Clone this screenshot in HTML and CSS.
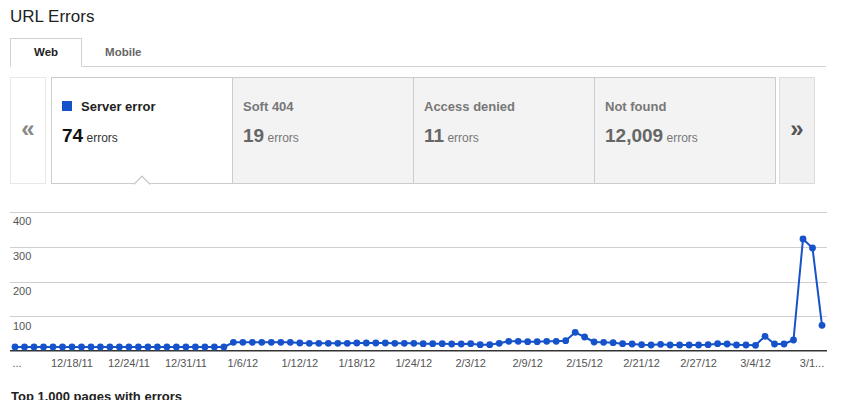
FILE: index.html
```html
<!DOCTYPE html>
<html>
<head>
<meta charset="utf-8">
<title>URL Errors</title>
<link rel="stylesheet" href="styles.css">
</head>
<body>
<div class="page">
  <h1 class="title">URL Errors</h1>
  <div class="tabs">
    <div class="tab active">Web</div>
    <div class="tab">Mobile</div>
  </div>
  <div class="summary">
    <div class="nav nav-prev">«</div>
    <div class="cards">
      <div class="card selected">
        <div class="card-title"><span class="swatch"></span>Server error</div>
        <div class="card-count"><span class="num">74</span> errors</div>
        <span class="caret"></span>
      </div>
      <div class="card">
        <div class="card-title">Soft 404</div>
        <div class="card-count"><span class="num">19</span> errors</div>
      </div>
      <div class="card">
        <div class="card-title">Access denied</div>
        <div class="card-count"><span class="num">11</span> errors</div>
      </div>
      <div class="card">
        <div class="card-title">Not found</div>
        <div class="card-count"><span class="num">12,009</span> errors</div>
      </div>
    </div>
    <div class="nav nav-next">»</div>
  </div>
</div>
<svg class="chart" width="844" height="189" viewBox="0 0 844 189" xmlns="http://www.w3.org/2000/svg">
  <defs>
    <marker id="dot" markerWidth="8" markerHeight="8" refX="4" refY="4" markerUnits="userSpaceOnUse">
      <circle cx="4" cy="4" r="3.4" fill="#1652c9"/>
    </marker>
  </defs>
  <g class="grid">
    <line x1="10" x2="827" y1="12.5" y2="12.5"/>
    <line x1="10" x2="827" y1="47.5" y2="47.5"/>
    <line x1="10" x2="827" y1="82.5" y2="82.5"/>
    <line x1="10" x2="827" y1="116.5" y2="116.5"/>
  </g>
  <line class="axis" x1="10" x2="827" y1="150.8" y2="150.8"/>
  <g class="ylab">
    <text x="13" y="25">400</text>
    <text x="13" y="60">300</text>
    <text x="13" y="94.5">200</text>
    <text x="13" y="129.5">100</text>
  </g>
  <polyline class="series" points="15,147 24.5,147 34,147 43.5,147 53,147 62.5,147 72,147 81.5,147 91,147 100.4,147 109.9,147 119.4,147 128.9,147 138.4,147 147.9,147 157.4,147 166.9,147 176.4,147 185.9,147 195.4,147 204.9,147 214.4,147 223.9,147 233.4,142.3 242.9,142.3 252.4,142.3 261.8,142.3 271.3,142.3 280.8,142.3 290.3,142.3 299.8,143 309.3,143.3 318.8,143.3 328.3,143.3 337.8,143.3 347.3,143.3 356.8,143 366.3,143 375.8,143 385.3,143 394.8,143.3 404.3,143.3 413.8,143.3 423.2,143.7 432.7,143.7 442.2,143.7 451.7,144 461.2,144 470.7,143.7 480.2,144.7 489.7,144.7 499.2,143.3 508.7,141.3 518.2,141.3 527.7,141.7 537.2,141.7 546.7,141.3 556.2,141.3 565.7,140.7 575.2,132.3 584.6,137 594.1,142 603.6,142.3 613.1,142.7 622.6,143.7 632.1,144 641.6,144.7 651.1,145 660.6,144.3 670.1,145 679.6,145 689.1,145 698.6,145 708.1,144.7 717.6,143.7 727.1,144 736.5,145 746,145 755.5,145.3 765,136.3 774.5,144 784,144 793.5,140 803,39 812.5,48 822,125.3"/>
  <g class="xlab">
    <text x="17" y="166.5">...</text>
    <text x="72" y="166.5">12/18/11</text>
    <text x="128.9" y="166.5">12/24/11</text>
    <text x="185.9" y="166.5">12/31/11</text>
    <text x="242.9" y="166.5">1/6/12</text>
    <text x="299.8" y="166.5">1/12/12</text>
    <text x="356.8" y="166.5">1/18/12</text>
    <text x="413.8" y="166.5">1/24/12</text>
    <text x="470.7" y="166.5">2/3/12</text>
    <text x="527.7" y="166.5">2/9/12</text>
    <text x="584.6" y="166.5">2/15/12</text>
    <text x="641.6" y="166.5">2/21/12</text>
    <text x="698.6" y="166.5">2/27/12</text>
    <text x="755.5" y="166.5">3/4/12</text>
    <text x="812" y="166.5">3/1...</text>
  </g>
</svg>
<h2 class="section">Top 1,000 pages with errors</h2>
</body>
</html>
```

FILE: styles.css
```css
body {
  margin: 0;
  background: #fff;
  color: #222;
  font-family: "Liberation Sans", Arial, sans-serif;
}

.page {
  padding: 7px 18px 0 10px;
}

.title {
  margin: 0;
  font-size: 17px;
  line-height: 20px;
  font-weight: normal;
  color: #222;
}

.tabs {
  display: flex;
  align-items: flex-start;
  margin-top: 11px;
  border-bottom: 1px solid #d0d0d0;
}

.tab {
  padding: 0 23px;
  line-height: 27px;
  font-size: 11.5px;
  font-weight: bold;
  color: #666;
  border-top: 1px solid transparent;
}

.tab.active {
  color: #222;
  background: #fff;
  border: 1px solid #d0d0d0;
  border-bottom: 1px solid #fff;
  margin-bottom: -1px;
}

.summary {
  display: flex;
  margin-top: 10px;
  height: 107px;
}

.nav {
  width: 36px;
  box-sizing: border-box;
  display: flex;
  align-items: center;
  justify-content: center;
  font-size: 24px;
  font-weight: bold;
  line-height: 1;
  padding-bottom: 4px;
}

.nav-prev {
  margin-right: 5px;
  border: 1px solid #e8e8e8;
  background: #fff;
  color: #888;
}

.nav-next {
  margin-left: 3px;
  border: 1px solid #dcdcdc;
  background: #f1f1f1;
  color: #555;
}

.cards {
  display: grid;
  grid-template-columns: repeat(4, 181px);
  border: 1px solid #cccccc;
  border-left: 0;
}

.card {
  position: relative;
  border-left: 1px solid #cccccc;
  padding: 21px 10px 0;
  background: #f3f3f3;
  color: #777;
}

.card.selected {
  background: #fff;
  color: #222;
}

.card-title {
  font-size: 13px;
  line-height: 16px;
  font-weight: bold;
}

.swatch {
  display: inline-block;
  width: 10px;
  height: 10px;
  margin-right: 9px;
  background: #1652c9;
}

.card-count {
  margin-top: 9px;
  font-size: 12px;
  line-height: 24px;
}

.num {
  font-size: 19px;
  font-weight: bold;
  color: #666;
}

.card.selected .num {
  color: #111;
}

.card.selected .card-count {
  color: #333;
}

.caret {
  position: absolute;
  left: 50%;
  bottom: -6.5px;
  width: 12px;
  height: 12px;
  margin-left: -6px;
  box-sizing: border-box;
  background: #fff;
  border-top: 1px solid #bbb;
  border-left: 1px solid #bbb;
  transform: rotate(45deg);
}

.chart {
  display: block;
  margin-top: 16px;
}

.chart .grid line {
  stroke: #cfcfcf;
  stroke-width: 1;
}

.chart .axis {
  stroke: #333;
  stroke-width: 1.4;
}

.chart text {
  font-family: "Liberation Sans", Arial, sans-serif;
  font-size: 11px;
  fill: #555;
}

.chart .xlab text {
  text-anchor: middle;
}

.chart .series {
  fill: none;
  stroke: #1652c9;
  stroke-width: 2;
  stroke-linejoin: round;
  marker-start: url(#dot);
  marker-mid: url(#dot);
  marker-end: url(#dot);
}

.section {
  margin: 0;
  padding-left: 11px;
  font-size: 13px;
  line-height: 16px;
  font-weight: bold;
  color: #222;
}
```
